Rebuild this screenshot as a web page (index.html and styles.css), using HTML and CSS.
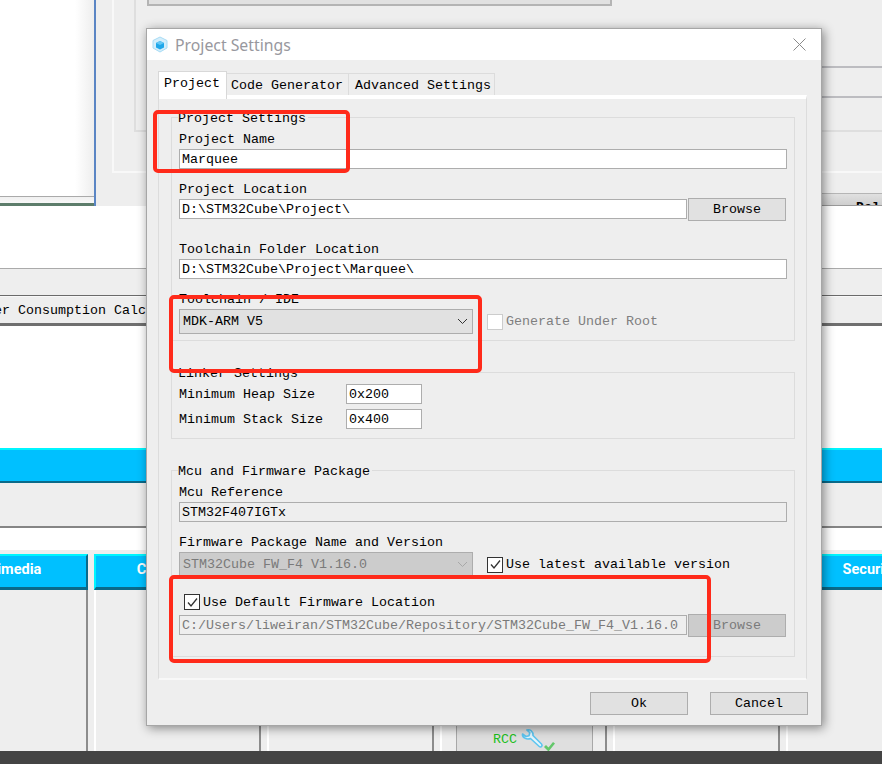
FILE: index.html
```html
<!DOCTYPE html>
<html lang="en">
<head>
<meta charset="utf-8">
<title>Project Settings</title>
<link rel="stylesheet" href="styles.css">
</head>
<body>
<div class="app">
  <div class="top">
    <div class="top-left"><div class="top-left-fill"></div><div class="top-left-rule"></div></div>
    <div class="top-main">
      <div class="outer-box">
        <div class="inner-box">
          <div class="old-bar"></div>
          <div class="side"><div class="side-a"></div></div>
        </div>
      </div>
      <div class="top-foot"><span class="clipped">Del</span></div>
    </div>
  </div>
  <div class="band-white"></div>
  <div class="band-grey"></div>
  <div class="band-tab"><span class="tab-text">Power Consumption Calculator</span></div>
  <div class="band-canvas"></div>
  <div class="band-blue"></div>
  <div class="band-empty"></div>
  <div class="band-white2"></div>
  <div class="categories">
    <div class="cat"><div class="cat-head">Multimedia</div></div>
    <div class="cat"><div class="cat-head">Connectivity</div></div>
    <div class="cat"><div class="cat-head"></div></div>
    <div class="cat"><div class="cat-head"></div>
      <div class="cat-body"><div class="rcc"><span class="rcc-name">RCC</span>
        <svg class="wrench" width="36" height="26" viewBox="0 0 36 26"><path d="M2.500 7 6 9.500l3-.8.8-3L6.800 3C10 2 13.500 4.500 13 8.500L21.500 17c1.500 1.500-.5 4-2.200 2.500L10.500 11.500C6.500 13 2 10.500 2.500 7Z" fill="#e4f5fc" stroke="#5cc5f0" stroke-width="1.600" stroke-linejoin="round"/><path d="M24 20l2-2 2.500 2.500 4.500-5.500 2 1.500-6.500 8Z" fill="#63c76a"/></svg>
      </div></div>
    </div>
    <div class="cat"></div>
    <div class="cat"><div class="cat-head">Security</div></div>
  </div>
  <div class="status"></div>
</div>

<section class="dialog">
  <header class="titlebar">
    <svg class="app-icon" width="16" height="17" viewBox="0 0 16 17"><path d="M8 1 15 4.500V12L8 16 1 12V4.500Z" fill="#d4eefb" stroke="#a8dcf5"/><path d="M8 5 12 7V11.500L8 13.500 4 11.500V7Z" fill="#1fa7ea"/><path d="M8 5 12 7 8 9 4 7Z" fill="#66c8f5"/></svg>
    <span class="title">Project Settings</span>
    <svg class="close" width="13" height="13" viewBox="0 0 13 13"><path d="M.5.500 12.500 12.500M12.500.500 .5 12.500" stroke="#8a8a8a" fill="none"/></svg>
  </header>
  <div class="dialog-body">
    <nav class="tabs">
      <span class="tab active">Project</span>
      <span class="tab code">Code Generator</span>
      <span class="tab adv">Advanced Settings</span>
    </nav>
    <div class="pane">
      <fieldset class="group g1">
        <legend>Project Settings</legend>
        <div class="label">Project Name</div>
        <div class="field">Marquee</div>
        <div class="label next">Project Location</div>
        <div class="row">
          <div class="field short">D:\STM32Cube\Project\</div>
          <div class="btn">Browse</div>
        </div>
        <div class="label next wide">Toolchain Folder Location</div>
        <div class="field">D:\STM32Cube\Project\Marquee\</div>
        <div class="label next">Toolchain / IDE</div>
        <div class="row tall">
          <div class="select"><span>MDK-ARM V5</span><svg width="11" height="7" viewBox="0 0 11 7"><path d="M1 1l4.500 4.500L10 1" stroke="#333" fill="none"/></svg></div>
          <div class="check off"></div>
          <span class="check-label muted">Generate Under Root</span>
        </div>
      </fieldset>
      <fieldset class="group g2">
        <legend>Linker Settings</legend>
        <div class="size-row"><span class="size-label">Minimum Heap Size</span><div class="field size">0x200</div></div>
        <div class="size-row"><span class="size-label">Minimum Stack Size</span><div class="field size">0x400</div></div>
      </fieldset>
      <fieldset class="group g3">
        <legend>Mcu and Firmware Package</legend>
        <div class="label">Mcu Reference</div>
        <div class="field grey">STM32F407IGTx</div>
        <div class="label next">Firmware Package Name and Version</div>
        <div class="row tall">
          <div class="select off"><span>STM32Cube FW_F4 V1.16.0</span><svg width="11" height="7" viewBox="0 0 11 7"><path d="M1 1l4.500 4.500L10 1" stroke="#a8a8a8" fill="none"/></svg></div>
          <div class="check on"><svg width="13" height="13" viewBox="0 0 13 13"><path d="M2 6.500 5 10l6-7.500" stroke="#333" stroke-width="1.300" fill="none"/></svg></div>
          <span class="check-label">Use latest available version</span>
        </div>
        <div class="default-row">
          <div class="check on"><svg width="13" height="13" viewBox="0 0 13 13"><path d="M2 6.500 5 10l6-7.500" stroke="#333" stroke-width="1.300" fill="none"/></svg></div>
          <span class="default-label">Use Default Firmware Location</span>
        </div>
        <div class="row">
          <div class="field short grey dim">C:/Users/liweiran/STM32Cube/Repository/STM32Cube_FW_F4_V1.16.0</div>
          <div class="btn off">Browse</div>
        </div>
      </fieldset>
    </div>
    <div class="actions"><div class="btn">Ok</div><div class="btn">Cancel</div></div>
  </div>
</section>

<div class="mark m1"></div>
<div class="mark m2"></div>
<div class="mark m3"></div>
</body>
</html>
```
FILE: styles.css
```css
* { box-sizing: border-box; }
html, body { margin: 0; padding: 0; }
body {
  width: 882px; height: 764px; overflow: hidden; position: relative;
  background: #eee; color: #000;
  font: 13.33px/16px "Liberation Mono", "DejaVu Sans Mono", monospace;
}
.app { display: flex; flex-direction: column; height: 764px; overflow: hidden; }
.top { display: flex; height: 206px; flex: none; }
.top-left { width: 96px; display: flex; flex-direction: column; border-right: 2px solid #5a85c4; background: #fff; }
.top-left-fill { flex: 1; background: linear-gradient(90deg, #fff 0, #fff 75px, #eee 94px); border-bottom: 1px solid #aaa; }
.top-left-rule { height: 9px; background: linear-gradient(#f0f0f0 0, #f8f8f8 6px, #5d7d6b 6px); }
.top-main { flex: 1; display: flex; flex-direction: column; min-width: 0; }
.outer-box { flex: none; height: 173px; margin-left: 16px; border-left: 2px solid #f8f8f8; border-bottom: 2px solid #f8f8f8; padding-left: 20px; }
.inner-box { height: 132px; border-left: 2px solid #dedede; border-bottom: 2px solid #dedede; display: flex; }
.old-bar { width: 465px; height: 6px; margin-left: 11px; flex: none; background: #e1e1e1; border: 2px solid #b4b4b4; border-top: 0; }
.side { flex: 1; padding-top: 66px; margin-left: 20px; }
.side-a { height: 32px; border-top: 2px solid #bcbcc0; border-bottom: 2px solid #bcbcc0; }
.top-foot { flex: 1; margin-top: 20px; margin-left: 200px; background: linear-gradient(#e0e0e0, #cfcfcf); border-top: 1px solid #b5b5b5; border-bottom: 1px solid #999; overflow: hidden; text-align: right; }
.clipped { display: block; font-weight: bold; line-height: 16px; margin-top: 6px; padding-right: 2px; }
.band-white { height: 62px; flex: none; background: #fff; }
.band-grey { height: 28px; flex: none; background: #eee; border-top: 1px solid #aaa; border-bottom: 1px solid #6a6a6a; }
.band-tab { height: 30px; flex: none; background: #eee; border-bottom: 3px solid #6f6f6f; border-top: 1px solid #f8f8f8; padding-top: 6px; overflow: hidden; white-space: nowrap; }
.tab-text { display: block; margin-left: -30px; }
.band-canvas { height: 122px; flex: none; background: #fff; }
.band-blue { height: 35px; flex: none; background: #00c0ff; border-top: 2px solid #00f5ff; border-bottom: 2px solid #0a6a8a; }
.band-empty { height: 45px; flex: none; background: #eee; border-bottom: 2px solid #858585; }
.band-white2 { height: 22px; flex: none; background: #fff; }
.categories { flex: 1; display: flex; gap: 6px; margin-left: -79px; padding-top: 4px; min-height: 0; }
.cat { width: 167px; flex: none; border-left: 2px solid #fff; border-right: 2px solid #8c8c8c; display: flex; flex-direction: column; }
.cat-head { height: 36px; margin-left: -2px; margin-right: -2px; background: #00c0ff; border-top: 2px solid #00f5ff; border-left: 2px solid #00f5ff; border-bottom: 3px solid #0a6a8a; border-right: 2px solid #0a6a8a; color: #fff; text-align: center; font: bold 14.5px/28px Roboto, "Liberation Sans", sans-serif; flex: none; }
.cat-body { flex: 1; padding-top: 134px; padding-left: 14px; }
.rcc { width: 137px; height: 27px; background: #dfdfdf; border: 1px solid #a8a8a8; border-bottom: 0; display: flex; padding: 6px 0 0 36px; overflow: hidden; }
.rcc-name { color: #1cc01c; line-height: 18px; }
.wrench { margin-left: 3px; margin-top: -4px; flex: none; }
.status { height: 13px; flex: none; background: #444; }

.dialog { position: absolute; left: 146px; top: 28px; width: 676px; height: 698px; background: #eee; border: 1px solid #a6a6a6; box-shadow: 2px 2px 10px rgba(0,0,0,.45); display: flex; flex-direction: column; }
.titlebar { height: 31px; flex: none; background: #fff; display: flex; align-items: center; padding: 0 15px 0 5px; }
.app-icon { flex: none; }
.title { margin-left: 7px; font: 15.8px/20px "Noto Sans", "Open Sans", sans-serif; color: #98989e; flex: 1; }
.close { flex: none; margin-top: -1px; }
.dialog-body { flex: 1; display: flex; flex-direction: column; padding: 10px 13px 10px 10px; min-height: 0; }
.tabs { display: flex; align-items: flex-end; height: 25px; flex: none; padding-left: 1px; }
.tab { height: 22px; background: #eee; border: 1px solid #dcdcdc; border-bottom: 0; line-height: 24px; padding: 0 3px 0 5px; }
.tab.active { height: 28px; width: 69px; margin-bottom: -4px; background: #fff; position: relative; z-index: 1; line-height: 23px; padding-left: 5px; border-color: #d8d8d8; }
.tab.code { width: 122px; border-left: 0; padding-left: 4px; }
.tab.adv { width: 146px; border-left: 0; padding-left: 6px; }
.pane { height: 585px; flex: none; margin-left: 1px; margin-right: 1px; border: 1px solid #dcdcdc; border-top: 4px solid #fff; border-bottom: 2px solid #f8f8f8; padding: 11px 11px 0 12px; display: flex; flex-direction: column; }
.group { margin: 0; padding: 0 7px; border: 1px solid #dcdcdc; min-width: 0; flex: none; }
.group legend { padding: 0 2px 0 0; margin-left: -1px; line-height: 18px; height: 14px; }
.g1 { height: 231px; padding-top: 8px; }
.g2 { height: 74px; margin-top: 24px; padding-top: 3px; }
.g3 { height: 194px; margin-top: 24px; padding-top: 8px; }
.label { height: 16px; margin-bottom: 1px; white-space: nowrap; }
.label.next { margin-top: 13px; }
.label.next.wide { margin-top: 23px; }
.field { height: 20px; background: #fff; border: 1px solid #adadad; padding-left: 2px; line-height: 20px; white-space: nowrap; overflow: hidden; }
.field.short { width: 508px; flex: none; }
.field.grey { background: #eee; }
.field.dim { color: #7a7a7a; }
.row { display: flex; height: 20px; width: 608px; align-items: flex-start; }
.btn { width: 98px; height: 23px; background: #e1e1e1; border: 1px solid #adadad; text-align: center; line-height: 21px; flex: none; }
.row .btn { margin-top: -1px; margin-left: 1px; }
.btn.off { background: #ccc; color: #7a7a7a; }
.row.tall { height: 25px; align-items: center; }
.select { width: 294px; height: 25px; flex: none; background: #e1e1e1; border: 1px solid #adadad; display: flex; align-items: center; justify-content: space-between; padding: 0 4px 0 3px; }
.select.off { background: #ccc; color: #7a7a7a; }
.check { width: 16px; height: 16px; flex: none; margin-left: 14px; border: 1px solid #333; background: #fff; display: flex; align-items: center; justify-content: center; }
.check.off { border-color: #ccc; }
.check-label { margin-left: 3px; white-space: nowrap; }
.check-label.muted { color: #7f7f7f; }
.size-row { display: flex; align-items: center; height: 25px; }
.size-label { width: 167px; flex: none; white-space: nowrap; }
.field.size { width: 76px; margin-bottom: 1px; line-height: 20px; }
.default-row { display: flex; align-items: center; height: 16px; margin-top: 17px; margin-bottom: 5px; padding-left: 5px; }
.default-row .check { margin-left: 0; }
.default-label { margin-left: 3px; padding-top: 2px; white-space: nowrap; }
.actions { display: flex; justify-content: flex-end; gap: 22px; flex: none; margin-top: 12px; }

.mark { position: absolute; border: 4px solid #ff2a1a; border-radius: 5px; pointer-events: none; }
.m1 { left: 153px; top: 110px; width: 197px; height: 63px; }
.m2 { left: 169px; top: 295px; width: 313px; height: 78px; }
.m3 { left: 169px; top: 575px; width: 542px; height: 88px; }
```
